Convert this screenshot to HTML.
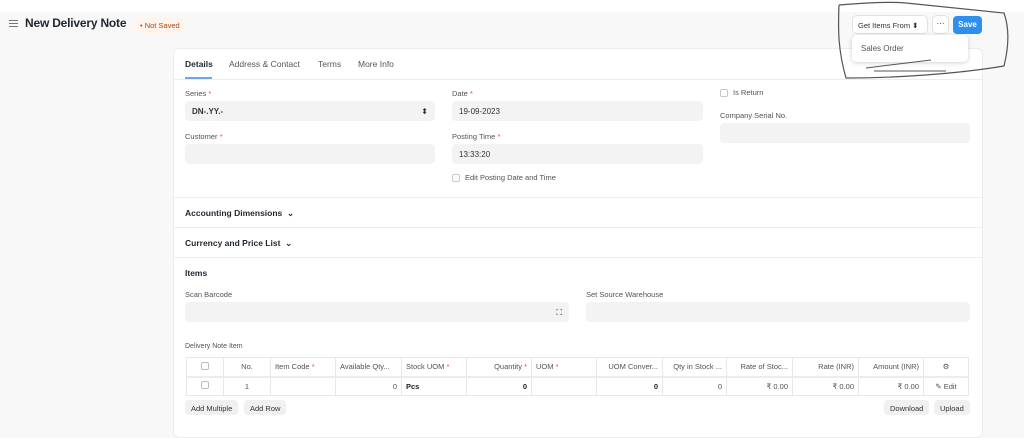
<!DOCTYPE html>
<html><head><style>
*{box-sizing:border-box;margin:0;padding:0}
body{width:1024px;height:428px;overflow:hidden;background:#f8f8f8;font-family:"Liberation Sans",sans-serif;color:#1f272e;position:relative;font-size:8px}
.top{position:absolute;left:0;top:0;width:1024px;height:12px;background:#fff}
.abs{position:absolute;white-space:nowrap}
.lbl{position:absolute;font-size:7.5px;color:#525252;white-space:nowrap}
.req{color:#e24c4c}
.inp{position:absolute;background:#f3f3f4;border-radius:4px;height:20px;font-size:8px;color:#333;padding:6px 7px}
.card{position:absolute;left:173px;top:48px;width:810px;height:390px;background:#fff;border:1px solid #ececec;border-radius:6px}
.hr{position:absolute;left:174px;width:808px;height:1px;background:#ededed}
.sec{position:absolute;left:185px;font-size:8.5px;font-weight:bold;color:#1f272e}
.cb{position:absolute;width:8px;height:8px;border:1px solid #c8c8c8;border-radius:2px;background:#fff}
table{position:absolute;left:186px;top:357px;width:783px;border-collapse:collapse;font-size:7.5px;color:#525252}
td{border:1px solid #e8e8e8;height:19px;padding:0 4px;white-space:nowrap;overflow:hidden}
tr:first-child td{border-bottom:2px solid #ececec}
.btn{position:absolute;background:#f0f0f0;border-radius:4px;font-size:7.5px;color:#333;height:15px;padding:4px 6px}
</style></head><body>
<div class="top"></div>
<div class="abs" style="left:9px;top:20px;width:9px;height:1px;background:#777;box-shadow:0 3px 0 #777,0 6px 0 #777"></div>
<div class="abs" style="left:25px;top:16px;font-size:12px;font-weight:bold;letter-spacing:-0.2px">New Delivery Note</div>
<div class="abs" style="left:135px;top:18px;background:#fff3ec;color:#a64d1a;font-size:7.5px;padding:3px 5px;border-radius:4px">• Not Saved</div>

<div class="abs" style="left:852px;top:15px;width:76px;height:19px;background:#fff;border:1px solid #e2e2e2;border-radius:5px;font-size:7.5px;padding:5px 5px;color:#333">Get Items From ⬍</div>
<div class="abs" style="left:932px;top:15px;width:17px;height:19px;background:#fff;border:1px solid #e2e2e2;border-radius:5px;font-size:8px;text-align:center;padding-top:3px">···</div>
<div class="abs" style="left:953px;top:16px;width:29px;height:18px;background:#2d8ff0;border-radius:4px;color:#fff;font-size:8px;font-weight:bold;text-align:center;padding-top:4px">Save</div>

<div class="card"></div>
<div class="abs" style="left:852px;top:35px;width:116px;height:27px;background:#fff;border-radius:5px;box-shadow:0 1px 5px rgba(0,0,0,.18);font-size:8px;color:#555;padding:9px 9px;z-index:3">Sales Order</div>
<svg class="abs" style="left:836px;top:0;z-index:4" width="176" height="82"><path d="M3 5 C40 2 60 2 70 3 L168 13 C174 30 172 50 168 66 C120 74 60 78 10 78 C2 50 2 30 3 5" fill="none" stroke="#555" stroke-width="1.2"/><path d="M30 68 L95 60 M38 71 L110 71" stroke="#555" stroke-width="1"/></svg>

<div class="abs" style="left:185px;top:59px;font-size:8.5px;font-weight:bold">Details</div>
<div class="abs" style="left:185px;top:77px;width:27px;height:2px;background:#6aa7ee"></div>
<div class="abs" style="left:229px;top:59px;font-size:8.5px;color:#555">Address &amp; Contact</div>
<div class="abs" style="left:318px;top:59px;font-size:8.5px;color:#555">Terms</div>
<div class="abs" style="left:358px;top:59px;font-size:8.5px;color:#555">More Info</div>
<div class="hr" style="top:79px"></div>

<div class="lbl" style="left:185px;top:89px">Series <span class="req">*</span></div>
<div class="inp" style="left:185px;top:101px;width:250px;font-weight:bold">DN-.YY.-<span style="float:right;font-weight:normal">⬍</span></div>
<div class="lbl" style="left:185px;top:132px">Customer <span class="req">*</span></div>
<div class="inp" style="left:185px;top:144px;width:250px"></div>
<div class="lbl" style="left:452px;top:89px">Date <span class="req">*</span></div>
<div class="inp" style="left:452px;top:101px;width:251px">19-09-2023</div>
<div class="lbl" style="left:452px;top:132px">Posting Time <span class="req">*</span></div>
<div class="inp" style="left:452px;top:144px;width:251px">13:33:20</div>
<div class="cb" style="left:452px;top:174px"></div>
<div class="lbl" style="left:465px;top:173px">Edit Posting Date and Time</div>
<div class="cb" style="left:720px;top:89px"></div>
<div class="lbl" style="left:733px;top:88px">Is Return</div>
<div class="lbl" style="left:720px;top:111px">Company Serial No.</div>
<div class="inp" style="left:720px;top:123px;width:250px"></div>

<div class="hr" style="top:197px"></div>
<div class="sec" style="top:208px">Accounting Dimensions &nbsp;⌄</div>
<div class="hr" style="top:227px"></div>
<div class="sec" style="top:238px">Currency and Price List &nbsp;⌄</div>
<div class="hr" style="top:257px"></div>
<div class="sec" style="top:268px">Items</div>
<div class="lbl" style="left:185px;top:290px">Scan Barcode</div>
<div class="inp" style="left:185px;top:302px;width:384px"><span style="float:right">⛶</span></div>
<div class="lbl" style="left:586px;top:290px">Set Source Warehouse</div>
<div class="inp" style="left:586px;top:302px;width:384px"></div>
<div class="lbl" style="left:185px;top:343px;font-size:7px">Delivery Note Item</div>

<table>
<tr><td style="width:37px;text-align:center"><span style="display:inline-block;width:8px;height:8px;border:1px solid #bbb;border-radius:2px"></span></td><td style="width:47px;text-align:center">No.</td><td style="width:65px">Item Code <span class="req">*</span></td><td style="width:66px">Available Qty...</td><td style="width:65px">Stock UOM <span class="req">*</span></td><td style="width:65px;text-align:right">Quantity <span class="req">*</span></td><td style="width:65px">UOM <span class="req">*</span></td><td style="width:66px;text-align:right">UOM Conver...</td><td style="width:64px;text-align:right">Qty in Stock ...</td><td style="width:66px;text-align:right">Rate of Stoc...</td><td style="width:66px;text-align:right">Rate (INR)</td><td style="width:65px;text-align:right">Amount (INR)</td><td style="text-align:center">⚙</td></tr>
<tr><td style="text-align:center"><span style="display:inline-block;width:8px;height:8px;border:1px solid #bbb;border-radius:2px"></span></td><td style="text-align:center">1</td><td></td><td style="text-align:right">0</td><td style="font-weight:bold;color:#222">Pcs</td><td style="text-align:right;font-weight:bold;color:#222">0</td><td></td><td style="text-align:right;font-weight:bold;color:#222">0</td><td style="text-align:right">0</td><td style="text-align:right">₹ 0.00</td><td style="text-align:right">₹ 0.00</td><td style="text-align:right">₹ 0.00</td><td style="text-align:center">✎ Edit</td></tr>
</table>
<div class="btn" style="left:185px;top:400px">Add Multiple</div>
<div class="btn" style="left:244px;top:400px">Add Row</div>
<div class="btn" style="left:884px;top:400px">Download</div>
<div class="btn" style="left:934px;top:400px">Upload</div>
</body></html>
